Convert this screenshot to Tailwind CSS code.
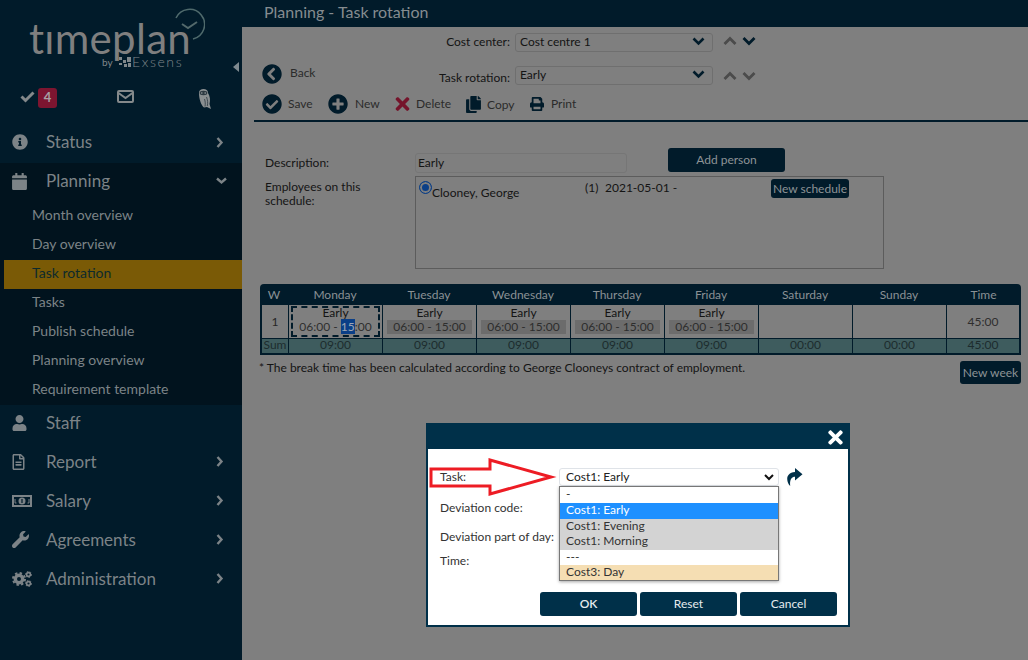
<!DOCTYPE html>
<html><head><meta charset="utf-8"><script src="https://cdn.jsdelivr.net/npm/@tailwindcss/browser@4"></script></head>
<body class="m-0">
<div class="relative flex h-[660px] w-[1028px] overflow-hidden bg-[#7f7f7f] font-['Lato','Liberation_Sans',sans-serif] text-[12px] text-[#141414]">
  <!-- sidebar -->
  <aside class="relative w-[242px] shrink-0 bg-[#011b2a] text-[#7c8387]">
    <div class="relative h-[82px]">
      <div class="absolute left-[29px] top-[20px] text-[42px] leading-[36px] font-normal tracking-[0.3px] text-[#7f7f7f]">tımeplan</div>
      <svg class="absolute left-[171px] top-[8px]" width="34" height="34" viewBox="0 0 34 34" fill="none" stroke="#4f6a6c" stroke-width="1.5"><path d="M5 10A15 15 0 1 1 22 31"/><path d="M11 16l6 4 9-6" stroke="#53696b" stroke-width="2"/></svg>
      <div class="absolute left-[102px] top-[56px] text-[10px] leading-[12px] text-[#80878a]">by</div>
      <svg class="absolute left-[119px] top-[57px]" width="12" height="10" viewBox="0 0 12 10" fill="#80878a"><path d="M0 0h3v3H0zM4 3h3v3H4zM8 0h4v5H8zM0 6h3v2H0zM5 7h3v3H5zM9 6h3v4H9z"/></svg>
      <div class="absolute left-[132px] top-[54px] text-[14px] leading-[16px] tracking-[1.6px] font-light text-[#80878a]">Exsens</div>
      <svg class="absolute left-[233px] top-[62px]" width="6" height="10" viewBox="0 0 6 10" fill="#7f8a90"><path d="M6 0v10L0 5z"/></svg>
    </div>
    <div class="relative h-[42px]">
      <svg class="absolute left-[20px] top-[8px]" width="15" height="13" viewBox="0 0 15 13" fill="none" stroke="#84898b" stroke-width="3"><path d="M1.500 6.500l4 4 8-8"/></svg>
      <div class="absolute left-[38px] top-[6px] flex h-[20px] w-[19px] items-center justify-center rounded-[3px] bg-[#7d1530] text-[13px] font-bold text-[#a7a0a3]">4</div>
      <svg class="absolute left-[117px] top-[8px]" width="17" height="13" viewBox="0 0 17 13" fill="none" stroke="#84898b" stroke-width="2"><rect x="1" y="1" width="15" height="11" rx="1"/><path d="M1.500 3l7 5 7-5"/></svg>
      <svg class="absolute left-[198px] top-[7px]" width="13" height="21" viewBox="0 0 13 21"><path d="M1 4C1 1 3 0 5.500 0S10 1 10 4c2 3 2.500 7 1.500 11l1.500 5-4-2-3 .5C3 16 1 10 1 4z" fill="#8a8f91"/><ellipse cx="5.500" cy="4" rx="3.800" ry="2.200" fill="#2d3a42"/><circle cx="3.800" cy="4" r=".8" fill="#9aa0a2"/><circle cx="7.200" cy="4" r=".8" fill="#9aa0a2"/><path d="M8.500 8c1.200 3 1.500 6 .8 9M6.500 10c.8 2.500 1 5 .5 7.500" stroke="#2d3a42" stroke-width=".8" fill="none"/></svg>
    </div>
    <nav class="text-[17px]">
      <div class="flex h-[39px] items-center pb-[3px]">
        <svg class="ml-[12px] w-[16px] h-[16px]" viewBox="0 0 512 512" fill="currentColor"><path d="M256 8C119.043 8 8 119.083 8 256c0 136.997 111.043 248 248 248s248-111.003 248-248C504 119.083 392.957 8 256 8zm0 110c23.196 0 42 18.804 42 42s-18.804 42-42 42-42-18.804-42-42 18.804-42 42-42zm56 254c0 6.627-5.373 12-12 12h-88c-6.627 0-12-5.373-12-12v-24c0-6.627 5.373-12 12-12h12v-64h-12c-6.627 0-12-5.373-12-12v-24c0-6.627 5.373-12 12-12h64c6.627 0 12 5.373 12 12v100h12c6.627 0 12 5.373 12 12v24z"/></svg>
        <span class="ml-[18px] flex-1">Status</span>
        <svg class="mr-[18px]" width="8" height="11" viewBox="0 0 8 11" fill="none" stroke="currentColor" stroke-width="2.400"><path d="M1.500 1l4 4.500-4 4.500"/></svg>
      </div>
      <div class="bg-[#01131e]">
        <div class="flex h-[36px] items-center">
          <svg class="ml-[12px] w-[15px] h-[17px]" viewBox="0 0 448 512" fill="currentColor"><path d="M12 192h424c6.600 0 12 5.400 12 12v260c0 26.500-21.500 48-48 48H48c-26.500 0-48-21.500-48-48V204c0-6.600 5.400-12 12-12zm436-44v-36c0-26.500-21.500-48-48-48h-48V12c0-6.600-5.400-12-12-12h-40c-6.600 0-12 5.400-12 12v52H160V12c0-6.600-5.400-12-12-12h-40c-6.600 0-12 5.400-12 12v52H48C21.500 64 0 85.500 0 112v36c0 6.600 5.400 12 12 12h424c6.600 0 12-5.400 12-12z"/></svg>
          <span class="ml-[19px] flex-1">Planning</span>
          <svg class="mr-[15px]" width="11" height="8" viewBox="0 0 11 8" fill="none" stroke="currentColor" stroke-width="2.400"><path d="M1 1.500l4.500 4 4.500-4"/></svg>
        </div>
        <ul class="text-[14px] pt-[3px]">
          <li class="flex h-[29px] items-center pb-[5px] pl-[32px]">Month overview</li>
          <li class="flex h-[29px] items-center pb-[5px] pl-[32px]">Day overview</li>
          <li class="ml-[4px] flex h-[29px] items-center bg-[#7a5a06] pb-[5px] pl-[28px] text-[#0d2a2c]">Task rotation</li>
          <li class="flex h-[29px] items-center pb-[5px] pl-[32px]">Tasks</li>
          <li class="flex h-[29px] items-center pb-[5px] pl-[32px]">Publish schedule</li>
          <li class="flex h-[29px] items-center pb-[5px] pl-[32px]">Planning overview</li>
          <li class="flex h-[29px] items-center pb-[5px] pl-[32px]">Requirement template</li>
        </ul>
      </div>
      <div class="flex h-[37px] items-center pb-[2px]">
        <svg class="ml-[12px] w-[15px] h-[16px]" viewBox="0 0 448 512" fill="currentColor"><path d="M224 256c70.700 0 128-57.300 128-128S294.700 0 224 0 96 57.300 96 128s57.300 128 128 128zm89.600 32h-16.700c-22.200 10.200-46.900 16-72.900 16s-50.600-5.800-72.900-16h-16.700C60.200 288 0 348.200 0 422.400V464c0 26.500 21.500 48 48 48h352c26.500 0 48-21.500 48-48v-41.600c0-74.200-60.200-134.400-134.400-134.400z"/></svg>
        <span class="ml-[19px] flex-1">Staff</span>
      </div>
      <div class="flex h-[39px] items-center">
        <svg class="ml-[12px] w-[13px] h-[16px]" viewBox="0 0 384 512" fill="currentColor"><path d="M288 248v28c0 6.600-5.400 12-12 12H108c-6.600 0-12-5.400-12-12v-28c0-6.600 5.400-12 12-12h168c6.600 0 12 5.400 12 12zm-12 72H108c-6.600 0-12 5.400-12 12v28c0 6.600 5.400 12 12 12h168c6.600 0 12-5.400 12-12v-28c0-6.600-5.400-12-12-12zm108-188.100V464c0 26.500-21.500 48-48 48H48c-26.500 0-48-21.500-48-48V48C0 21.500 21.500 0 48 0h204.100C264.800 0 277 5.100 286 14.100L369.900 98c9 8.900 14.100 21.200 14.100 33.900zm-128-80V128h76.100L256 51.900zM336 464V176H232c-13.300 0-24-10.700-24-24V48H48v416h288z"/></svg>
        <span class="ml-[21px] flex-1">Report</span>
        <svg class="mr-[18px]" width="8" height="11" viewBox="0 0 8 11" fill="none" stroke="currentColor" stroke-width="2.400"><path d="M1.500 1l4 4.500-4 4.500"/></svg>
      </div>
      <div class="flex h-[39px] items-center">
        <svg class="ml-[12px] w-[20px] h-[12px]" viewBox="0 0 20 12"><path fill="currentColor" fill-rule="evenodd" d="M0 0h20v12H0zM2 2v8h16V2z"/><circle cx="10" cy="6" r="3.500" fill="currentColor"/><path d="M10 4v4" stroke="#011b2a" stroke-width="1.200"/><path d="M3 4v4h1.500M17 4v4h-1.500" stroke="currentColor" fill="none"/></svg>
        <span class="ml-[14px] flex-1">Salary</span>
        <svg class="mr-[18px]" width="8" height="11" viewBox="0 0 8 11" fill="none" stroke="currentColor" stroke-width="2.400"><path d="M1.500 1l4 4.500-4 4.500"/></svg>
      </div>
      <div class="flex h-[39px] items-center">
        <svg class="ml-[12px] w-[17px] h-[17px]" viewBox="0 0 512 512" fill="currentColor"><path d="M507.730 109.100c-2.240-9.030-13.540-12.090-20.120-5.510l-74.360 74.360-67.880-11.310-11.310-67.880 74.360-74.360c6.620-6.620 3.430-17.900-5.660-20.160-47.380-11.740-99.550.91-136.580 37.930-39.640 39.640-50.550 97.100-34.050 147.200L18.740 402.760c-24.990 24.990-24.990 65.510 0 90.500 24.990 24.990 65.510 24.990 90.500 0l213.210-213.210c50.120 16.710 107.470 5.680 147.370-34.220 37.070-37.070 49.700-89.320 37.910-136.730z"/></svg>
        <span class="ml-[17px] flex-1">Agreements</span>
        <svg class="mr-[18px]" width="8" height="11" viewBox="0 0 8 11" fill="none" stroke="currentColor" stroke-width="2.400"><path d="M1.500 1l4 4.500-4 4.500"/></svg>
      </div>
      <div class="flex h-[39px] items-center">
        <svg class="ml-[12px] w-[20px] h-[16px]" viewBox="0 0 20 16" fill="none" stroke="currentColor"><circle cx="7" cy="8" r="3.700" stroke-width="3.400"/><circle cx="7" cy="8" r="6" stroke-width="2" stroke-dasharray="2.400 2.300"/><circle cx="16.500" cy="3.500" r="1.900" stroke-width="1.600"/><circle cx="16.500" cy="12.500" r="1.900" stroke-width="1.600"/><circle cx="16.500" cy="3.500" r="3" stroke-width="1" stroke-dasharray="1.500 1.500"/><circle cx="16.500" cy="12.500" r="3" stroke-width="1" stroke-dasharray="1.500 1.500"/></svg>
        <span class="ml-[14px] flex-1">Administration</span>
        <svg class="mr-[18px]" width="8" height="11" viewBox="0 0 8 11" fill="none" stroke="currentColor" stroke-width="2.400"><path d="M1.500 1l4 4.500-4 4.500"/></svg>
      </div>
    </nav>
  </aside>

  <!-- main -->
  <main class="flex-1 min-w-0">
    <header class="flex h-[27px] items-center bg-[#011b2a] pl-[22px] text-[16px] text-[#858c90] pb-[3px]">Planning - Task rotation</header>

    <div class="mt-[6px] flex h-[19px] items-center">
      <div class="w-[268px] text-right pb-[1px]">Cost center:</div>
      <div class="ml-[5px] flex h-[19px] w-[198px] items-center justify-between rounded-[3px] border border-[#6f6f6f] pb-[2px] pl-[4px] pr-[7px]">Cost centre 1
        <svg width="13" height="9" viewBox="0 0 13 9" fill="none" stroke="#011b2a" stroke-width="2.600"><path d="M1.500 1.500l5 5 5-5"/></svg></div>
      <svg class="ml-[10px] -mt-[3px]" width="14" height="10" viewBox="0 0 14 10" fill="none" stroke="#4b4b4b" stroke-width="2.800"><path d="M1.500 8l5.500-5.500 5.500 5.500"/></svg>
      <svg class="ml-[5px] -mt-[4px]" width="14" height="10" viewBox="0 0 14 10" fill="none" stroke="#011b2a" stroke-width="2.800"><path d="M1.500 2l5.500 5.500 5.500-5.500"/></svg>
    </div>

    <div class="mt-[14px] flex h-[19px] items-center">
      <div class="flex w-[268px] items-center justify-between pl-[20px]">
        <div class="flex items-center -mt-[4px]">
          <svg width="20" height="20" viewBox="0 0 512 512" fill="#011b2a"><path d="M256 504C119 504 8 393 8 256S119 8 256 8s248 111 248 248-111 248-248 248zM142.100 273l135.500 135.500c9.400 9.400 24.600 9.400 33.900 0l17-17c9.400-9.400 9.400-24.600 0-33.900L226.900 256l101.600-101.600c9.400-9.400 9.400-24.600 0-33.900l-17-17c-9.400-9.400-24.600-9.400-33.900 0L142.100 239c-9.400 9.400-9.400 24.600 0 34z"/></svg>
          <span class="ml-[8px] pb-[2px] text-[#2b2b2b]">Back</span>
        </div>
        <span class="mt-[5px]">Task rotation:</span>
      </div>
      <div class="ml-[5px] flex h-[19px] w-[198px] items-center justify-between rounded-[3px] border border-[#6f6f6f] pb-[2px] pl-[4px] pr-[7px]">Early
        <svg width="13" height="9" viewBox="0 0 13 9" fill="none" stroke="#011b2a" stroke-width="2.600"><path d="M1.500 1.500l5 5 5-5"/></svg></div>
      <svg class="ml-[10px]" width="14" height="10" viewBox="0 0 14 10" fill="none" stroke="#4b4b4b" stroke-width="2.800"><path d="M1.500 8l5.500-5.500 5.500 5.500"/></svg>
      <svg class="ml-[5px]" width="14" height="10" viewBox="0 0 14 10" fill="none" stroke="#4b4b4b" stroke-width="2.800"><path d="M1.500 2l5.500 5.500 5.500-5.500"/></svg>
    </div>

    <div class="mt-[9px] flex h-[20px] items-center pl-[20px] text-[#2b2b2b]">
      <svg width="20" height="20" viewBox="0 0 512 512" fill="#011b2a"><path d="M504 256c0 136.967-111.033 248-248 248S8 392.967 8 256 119.033 8 256 8s248 111.033 248 248zM227.314 387.314l184-184c6.248-6.248 6.248-16.379 0-22.627l-22.627-22.627c-6.248-6.249-16.379-6.249-22.628 0L216 308.118l-70.059-70.059c-6.248-6.248-16.379-6.248-22.628 0l-22.627 22.627c-6.248 6.248-6.248 16.379 0 22.627l104 104c6.249 6.249 16.379 6.249 22.628.001z"/></svg>
      <span class="ml-[6px] w-[25px]">Save</span>
      <svg class="ml-[15px]" width="20" height="20" viewBox="0 0 512 512" fill="#011b2a"><path d="M256 8C119 8 8 119 8 256s111 248 248 248 248-111 248-248S393 8 256 8zm144 276c0 6.600-5.400 12-12 12h-92v92c0 6.600-5.400 12-12 12h-56c-6.600 0-12-5.400-12-12v-92h-92c-6.600 0-12-5.400-12-12v-56c0-6.600 5.400-12 12-12h92v-92c0-6.600 5.400-12 12-12h56c6.600 0 12 5.400 12 12v92h92c6.600 0 12 5.400 12 12v56z"/></svg>
      <span class="ml-[7px] w-[25px]">New</span>
      <svg class="ml-[15px]" width="15" height="20" viewBox="0 0 352 512" fill="#75142b"><path d="M242.720 256l100.070-100.070c12.280-12.280 12.280-32.190 0-44.480l-22.240-22.240c-12.280-12.280-32.190-12.280-44.480 0L176 189.280 75.930 89.210c-12.280-12.280-32.190-12.280-44.480 0L9.210 111.450c-12.280 12.280-12.280 32.190 0 44.480L109.280 256 9.210 356.070c-12.280 12.280-12.280 32.190 0 44.480l22.240 22.240c12.280 12.280 32.200 12.280 44.480 0L176 322.720l100.070 100.070c12.280 12.280 32.200 12.280 44.480 0l22.240-22.240c12.280-12.280 12.280-32.190 0-44.480L242.720 256z"/></svg>
      <span class="ml-[6px] w-[35px]">Delete</span>
      <svg class="ml-[15px]" width="15" height="17" viewBox="0 0 448 512" fill="#011b2a"><path d="M320 448v40c0 13.255-10.745 24-24 24H24c-13.255 0-24-10.745-24-24V120c0-13.255 10.745-24 24-24h72v296c0 30.879 25.121 56 56 56h168zm0-344V0H152c-13.255 0-24 10.745-24 24v368c0 13.255 10.745 24 24 24h272c13.255 0 24-10.745 24-24V128H344c-13.200 0-24-10.800-24-24zm120.971-31.029L375.029 7.029A24 24 0 0 0 358.059 0H352v96h96v-6.059a24 24 0 0 0-7.029-16.970z"/></svg>
      <span class="ml-[6px] mt-[1px] w-[28px]">Copy</span>
      <svg class="ml-[15px]" width="14" height="14" viewBox="0 0 512 512" fill="#011b2a"><path d="M448 192V77.250c0-8.490-3.370-16.620-9.370-22.630L393.370 9.370c-6-6-14.140-9.370-22.630-9.370H96C78.330 0 64 14.330 64 32v160c-35.350 0-64 28.650-64 64v112c0 8.840 7.160 16 16 16h48v96c0 17.670 14.330 32 32 32h320c17.670 0 32-14.330 32-32v-96h48c8.840 0 16-7.160 16-16V256c0-35.350-28.650-64-64-64zm-64 256H128v-96h256v96zm0-224H128V64h192v48c0 8.840 7.160 16 16 16h48v96z"/></svg>
      <span class="ml-[7px]">Print</span>
    </div>
    <div class="ml-[12px] mt-[6px] h-[2px] bg-[#011b2a]"></div>

    <div class="mt-[26px] flex h-[24px] items-center">
      <div class="w-[173px] pl-[23px] pt-[6px]">Description:</div>
      <div class="mt-[5px] flex h-[20px] w-[212px] items-center rounded-[3px] border border-[#767676] pl-[2px] pt-[1px]">Early</div>
      <div class="ml-[41px] flex h-[24px] w-[117px] items-center justify-center rounded-[3px] bg-[#011b2a] text-[#8d9396]">Add person</div>
    </div>
    <div class="mt-[4px] flex">
      <div class="w-[173px] pl-[23px] leading-[14px] pt-[4px]">Employees on this<br>schedule:</div>
      <div class="relative h-[93px] w-[469px] border border-[#5c5c5c]">
        <span class="absolute left-[3px] top-[4px] h-[13px] w-[13px] rounded-full border border-[#0b3f87] bg-[#0b3f87] shadow-[inset_0_0_0_2px_#7f7f7f]"></span>
        <span class="absolute left-[16px] top-[8px] leading-[16px]">Clooney, George</span>
        <span class="absolute left-[169px] top-[3px] leading-[16px]">(1)</span>
        <span class="absolute left-[189px] top-[3px] leading-[16px]">2021-05-01 -</span>
        <span class="absolute left-[355px] top-[2px] flex h-[19px] w-[78px] items-center justify-center whitespace-nowrap rounded-[3px] bg-[#011b2a] text-[#8d9396]">New schedule</span>
      </div>
    </div>

    <table class="ml-[18px] mt-[15px] w-[761px] table-fixed border-separate border-spacing-0 text-center text-[12px]">
      <colgroup><col class="w-[28px]"><col class="w-[94px]"><col class="w-[94px]"><col class="w-[94px]"><col class="w-[94px]"><col class="w-[94px]"><col class="w-[94px]"><col class="w-[94px]"><col class="w-[75px]"></colgroup>
      <thead class="text-[#8a9195]">
        <tr class="h-[21px] bg-[#011b2a]">
          <th class="rounded-tl-[4px] font-normal">W</th><th class="font-normal">Monday</th><th class="font-normal">Tuesday</th><th class="font-normal">Wednesday</th><th class="font-normal">Thursday</th><th class="font-normal">Friday</th><th class="font-normal">Saturday</th><th class="font-normal">Sunday</th><th class="rounded-tr-[4px] font-normal">Time</th>
        </tr>
      </thead>
      <tbody>
        <tr class="h-[34px]">
          <td class="border-l-2 border-b border-[#011b2a] text-[#262626]">1</td>
          <td class="border-l border-b border-[#011b2a] p-0 align-top"><div class="mx-[2px] mt-[1px] h-[31px] border-2 border-dashed border-[#011b2a] leading-[14px]"><div class="-mt-[2px]">Early</div><div class="text-[#303030] whitespace-nowrap">06:00 - <span class="bg-[#0b3f87] text-[#9fa7b5]">15</span>:00</div></div></td>
          <td class="border-l border-b border-[#011b2a] px-[4px] pt-[1px] align-top leading-[14px]"><div>Early</div><div class="bg-[#6c6c6c] text-[#2e2e2e]">06:00 - 15:00</div></td>
          <td class="border-l border-b border-[#011b2a] px-[4px] pt-[1px] align-top leading-[14px]"><div>Early</div><div class="bg-[#6c6c6c] text-[#2e2e2e]">06:00 - 15:00</div></td>
          <td class="border-l border-b border-[#011b2a] px-[4px] pt-[1px] align-top leading-[14px]"><div>Early</div><div class="bg-[#6c6c6c] text-[#2e2e2e]">06:00 - 15:00</div></td>
          <td class="border-l border-b border-[#011b2a] px-[4px] pt-[1px] align-top leading-[14px]"><div>Early</div><div class="bg-[#6c6c6c] text-[#2e2e2e]">06:00 - 15:00</div></td>
          <td class="border-l border-b border-[#011b2a]"></td>
          <td class="border-l border-b border-[#011b2a]"></td>
          <td class="border-l border-r-2 border-b border-[#011b2a] text-[#2e2e2e]">45:00</td>
        </tr>
        <tr class="h-[16px] bg-[#3e5c5e] text-[#1d2c2e] leading-[12px]">
          <td class="border-l-2 border-b-2 border-[#011b2a] p-0 align-top">Sum</td>
          <td class="border-l border-b-2 border-[#011b2a] p-0 align-top">09:00</td><td class="border-l border-b-2 border-[#011b2a] p-0 align-top">09:00</td><td class="border-l border-b-2 border-[#011b2a] p-0 align-top">09:00</td><td class="border-l border-b-2 border-[#011b2a] p-0 align-top">09:00</td><td class="border-l border-b-2 border-[#011b2a] p-0 align-top">09:00</td><td class="border-l border-b-2 border-[#011b2a] p-0 align-top">00:00</td><td class="border-l border-b-2 border-[#011b2a] p-0 align-top">00:00</td>
          <td class="border-l border-r-2 border-b-2 border-[#011b2a] p-0 align-top">45:00</td>
        </tr>
      </tbody>
    </table>
    <div class="mt-[5px] flex items-start pl-[17px] pr-[7px] justify-between">
      <span class="leading-[16px]">* The break time has been calculated according to George Clooneys contract of employment.</span>
      <span class="mt-[1px] flex h-[23px] w-[61px] items-center justify-center whitespace-nowrap rounded-[3px] bg-[#011b2a] text-[#8d9396]">New week</span>
    </div>
  </main>

  <!-- dialog -->
  <div class="absolute left-[426px] top-[423px] h-[204px] w-[424px] border-2 border-[#003049] bg-white text-[#333]">
    <div class="relative flex h-[24px] items-center justify-end bg-[#003049] pr-[5px]">
      <svg width="15" height="21" viewBox="0 0 352 512" fill="#fff"><path d="M242.720 256l100.070-100.070c12.280-12.280 12.280-32.190 0-44.480l-22.240-22.240c-12.280-12.280-32.190-12.280-44.480 0L176 189.280 75.930 89.210c-12.280-12.280-32.190-12.280-44.480 0L9.210 111.450c-12.280 12.280-12.280 32.190 0 44.480L109.280 256 9.210 356.070c-12.280 12.280-12.280 32.190 0 44.480l22.240 22.240c12.280 12.280 32.200 12.280 44.480 0L176 322.720l100.070 100.070c12.280 12.280 32.200 12.280 44.480 0l22.240-22.240c12.280-12.280 12.280-32.190 0-44.480L242.720 256z"/></svg>
    </div>
    <div class="relative pl-[12px]">
      <div class="pt-[20px] leading-[16px]">
        <div class="h-[31px]">Task:</div>
        <div class="h-[29px]">Deviation code:</div>
        <div class="h-[24px]">Deviation part of day:</div>
        <div>Time:</div>
      </div>
      <div class="absolute left-[131px] top-[19px] flex h-[18px] w-[220px] items-center justify-between rounded-[3px] border border-[#dfe3e8] pl-[6px] pr-[4px] text-[#222]">Cost1: Early
        <svg width="10" height="7" viewBox="0 0 10 7" fill="none" stroke="#111" stroke-width="2"><path d="M1 1l4 4 4-4"/></svg></div>
      <svg class="absolute left-[357px] top-[19px]" width="18" height="18" viewBox="0 0 18 18" fill="#003049"><path d="M10 0l7.500 6.200L10 12.500V8.700C6.500 8.700 4.500 12 5.200 18 1.500 14.500-.5 5 10 4z"/></svg>
      <ul class="absolute left-[131px] top-[37px] w-[220px] border border-[#777] bg-white text-[#333] leading-[14px] shadow-[0_1px_3px_rgba(0,0,0,0.35)]">
        <li class="h-[15.500px] pl-[6px]">-</li>
        <li class="h-[16px] bg-[#1e90ff] pl-[6px] text-white">Cost1: Early</li>
        <li class="h-[15.500px] bg-[#d3d3d3] pl-[6px]">Cost1: Evening</li>
        <li class="h-[15.500px] bg-[#d3d3d3] pl-[6px]">Cost1: Morning</li>
        <li class="h-[15px] pl-[6px]">---</li>
        <li class="h-[15.500px] bg-[#f5deb3] pl-[6px]">Cost3: Day</li>
      </ul>
    </div>
    <div class="absolute left-[112px] top-[167px] flex gap-[3px] text-[#e6ebee]">
      <div class="flex h-[24px] w-[97px] items-center justify-center rounded-[3px] bg-[#003049] font-semibold">OK</div>
      <div class="flex h-[24px] w-[97px] items-center justify-center rounded-[3px] bg-[#003049]">Reset</div>
      <div class="flex h-[24px] w-[97px] items-center justify-center rounded-[3px] bg-[#003049]">Cancel</div>
    </div>
  </div>
  <svg class="absolute left-[429px] top-[457px]" width="128" height="40" viewBox="0 0 128 40" fill="none" stroke="#ed1c24" stroke-width="3"><path d="M2 12H61V3l61 17-61 17v-8H2z"/></svg>
</div>
</body></html>
